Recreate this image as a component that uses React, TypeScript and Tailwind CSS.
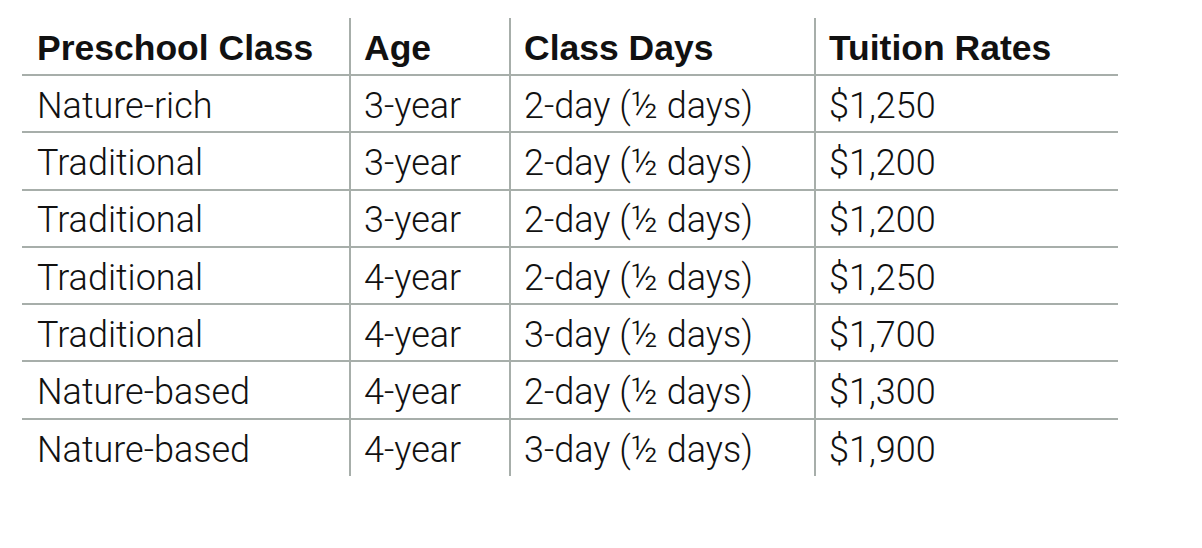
const HEADERS = ["Preschool Class", "Age", "Class Days", "Tuition Rates"];

const ROWS: string[][] = [
  ["Nature-rich", "3-year", "2-day (½ days)", "$1,250"],
  ["Traditional", "3-year", "2-day (½ days)", "$1,200"],
  ["Traditional", "3-year", "2-day (½ days)", "$1,200"],
  ["Traditional", "4-year", "2-day (½ days)", "$1,250"],
  ["Traditional", "4-year", "3-day (½ days)", "$1,700"],
  ["Nature-based", "4-year", "2-day (½ days)", "$1,300"],
  ["Nature-based", "4-year", "3-day (½ days)", "$1,900"],
];

const COL_W = ["w-[328px]", "w-[160px]", "w-[305px]", "w-[303px]"];

export default function App() {
  return (
    <div className="w-[1202px] h-[548px] bg-white pt-[18px] pl-[22px] text-[#111]">
      <table className="border-collapse table-fixed w-[1096px]">
        <thead>
          <tr className="h-[57px] border-b-2 border-[#a7aeaa]">
            {HEADERS.map((h, i) => (
              <th
                key={h}
                className={`${COL_W[i]} text-left align-middle font-['Liberation_Sans',Arial,sans-serif] font-bold text-[35.5px] leading-none pt-[5px] ${
                  i > 0 ? "border-l-2 border-[#a7aeaa] pl-[13px]" : "pl-[15px]"
                }`}
              >
                {h}
              </th>
            ))}
          </tr>
        </thead>
        <tbody>
          {ROWS.map((row, r) => (
            <tr
              key={r}
              className={`h-[57.3px] ${r < ROWS.length - 1 ? "border-b-2 border-[#a7aeaa]" : ""}`}
            >
              {row.map((cell, i) => (
                <td
                  key={i}
                  className={`text-left align-middle font-['Roboto',sans-serif] font-light text-[36px] leading-none pt-[4px] ${
                    i > 0 ? "border-l-2 border-[#a7aeaa] pl-[13px]" : "pl-[15px]"
                  }`}
                >
                  {cell}
                </td>
              ))}
            </tr>
          ))}
        </tbody>
      </table>
    </div>
  );
}
